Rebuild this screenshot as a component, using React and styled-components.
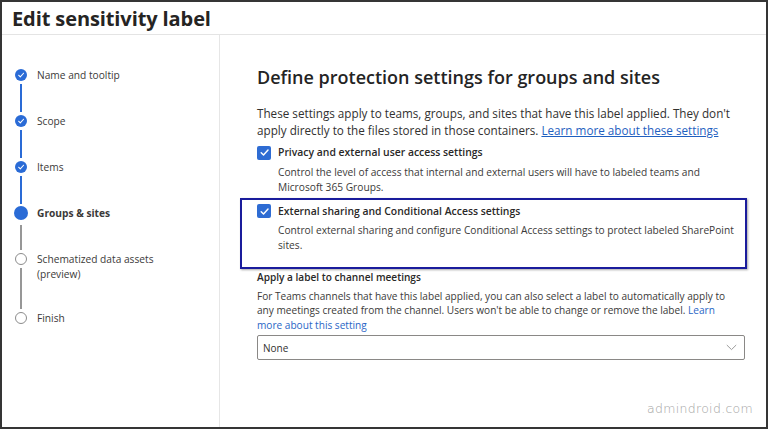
import styled, { createGlobalStyle } from "styled-components";

const GlobalStyle = createGlobalStyle`
    html, body {
        margin: 0;
        padding: 0;
        background: #ffffff;
    }

    * {
        box-sizing: border-box;
    }
`;

const Frame = styled.div`
    position: relative;
    width: 768px;
    height: 429px;
    border: 2px solid #353535;
    background: #ffffff;
    font-family: "Open Sans", "Noto Sans", sans-serif;
    color: #292827;
    overflow: hidden;
    display: flex;
    flex-direction: column;
`;

const Header = styled.div`
    height: 33px;
    flex-shrink: 0;
    border-bottom: 1px solid #e4e4e4;
    display: flex;
    align-items: center;
    padding-left: 10px;
`;

const Title = styled.h1`
    margin: 0;
    font-size: 20px;
    font-weight: 700;
    color: #252423;
    letter-spacing: -0.1px;
`;

const Body = styled.div`
    flex: 1;
    display: flex;
`;

const Nav = styled.div`
    width: 218px;
    flex-shrink: 0;
    border-right: 1px solid #e6e6e6;
    padding: 34px 0 0 12px;
    display: flex;
    flex-direction: column;
`;

const Step = styled.div`
    display: flex;
    height: ${(p) => (p.$tall ? 59 : 46)}px;
`;

const Marker = styled.div`
    width: 14px;
    display: flex;
    flex-direction: column;
    align-items: center;
`;

const Dot = styled.div`
    width: ${(p) => (p.$state === "current" ? 14 : 12)}px;
    height: ${(p) => (p.$state === "current" ? 14 : 12)}px;
    margin-top: ${(p) => (p.$state === "current" ? -1 : 0)}px;
    border-radius: 50%;
    flex-shrink: 0;
    display: flex;
    align-items: center;
    justify-content: center;
    background: ${(p) => (p.$state === "todo" ? "#ffffff" : "#2a6bd6")};
    border: ${(p) => (p.$state === "todo" ? "1.5px solid #8c8c8c" : "none")};
`;

const Connector = styled.div`
    flex: 1;
    width: ${(p) => (p.$done ? 2 : 1.5)}px;
    margin: ${(p) => (p.$fromCurrent ? "5px" : "3px")} 0 3px;
    background: ${(p) => (p.$done ? "#2a6bd6" : "#979797")};
`;

const StepLabel = styled.div`
    margin-left: 9px;
    margin-top: -1.5px;
    font-size: 10.2px;
    line-height: 15px;
    color: #3b3a39;
    font-weight: ${(p) => (p.$current ? 700 : 400)};
`;

const Content = styled.div`
    flex: 1;
    padding: 30px 0 0 37px;
`;

const Column = styled.div`
    width: 488px;
`;

const Heading = styled.h2`
    margin: 0;
    font-size: 18px;
    line-height: 24px;
    font-weight: 600;
    color: #242424;
`;

const Intro = styled.p`
    margin: 16px 0 0;
    font-size: 11.7px;
    line-height: 16.5px;
    color: #323130;
`;

const Link = styled.a`
    color: ${(p) => (p.$underline ? "#1f5fbf" : "#2a66c6")};
    text-decoration: ${(p) => (p.$underline ? "underline" : "none")};
    text-underline-offset: 1px;
    cursor: pointer;
`;

const Option = styled.div`
    display: grid;
    grid-template-columns: 14px 1fr;
    column-gap: 7px;
    margin-top: ${(p) => p.$gap}px;
`;

const Highlight = styled.div`
    margin: 3.5px -2px 0 -17px;
    border: 2px solid #1a1c9c;
    box-shadow: 1px 1px 2px rgba(0, 0, 0, 0.35);
    padding: 2.5px 0 13.5px 15px;
`;

const Box = styled.div`
    width: 14px;
    height: 14px;
    margin-top: 1.5px;
    border-radius: 2px;
    background: #2e6cd3;
    display: flex;
    align-items: center;
    justify-content: center;
`;

const OptionTitle = styled.div`
    font-size: 10.4px;
    line-height: 16px;
    font-weight: 600;
    color: #292827;
`;

const OptionText = styled.div`
    grid-column: 2;
    margin-top: 4.5px;
    font-size: 10.2px;
    line-height: 15px;
    color: #3b3a39;
`;

const SubTitle = styled.div`
    margin-top: 0.5px;
    font-size: 10.1px;
    line-height: 16px;
    font-weight: 600;
    color: #292827;
`;

const SubText = styled.p`
    width: 478px;
    margin: 3.75px 0 0;
    font-size: 10.1px;
    line-height: 14.5px;
    color: #3b3a39;
`;

const Select = styled.div`
    margin-top: 3px;
    height: 25px;
    border: 1px solid #8a8886;
    border-radius: 2px;
    display: flex;
    align-items: center;
    justify-content: space-between;
    padding: 0 7px 0 5px;
    font-size: 10px;
    color: #323130;
`;

const Watermark = styled.div`
    position: absolute;
    right: 13px;
    bottom: 10px;
    font-family: "DejaVu Sans", sans-serif;
    font-weight: 300;
    font-size: 12.5px;
    line-height: 16px;
    letter-spacing: 0.3px;
    color: #a3a3a3;
`;

const Check = ({ size = 8 }) => (
    <svg width={size} height={size} viewBox="0 0 10 10" fill="none">
        <path d="M2 5.3 L4.1 7.3 L8.2 2.8" stroke="#ffffff" strokeWidth="1.3" strokeLinecap="round" strokeLinejoin="round" />
    </svg>
);

const Chevron = () => (
    <svg width="11" height="7" viewBox="0 0 11 7" fill="none">
        <path d="M0.8 1 L5.5 5.6 L10.2 1" stroke="#9b9b9b" strokeWidth="1" />
    </svg>
);

const steps = [
    { label: "Name and tooltip", state: "done" },
    { label: "Scope", state: "done" },
    { label: "Items", state: "done" },
    { label: "Groups & sites", state: "current" },
    { label: <>Schematized data assets<br />(preview)</>, state: "todo", tall: true },
    { label: "Finish", state: "todo" },
];

export default function App() {
    return (
        <>
            <GlobalStyle />
            <Frame>
                <Header>
                    <Title>Edit sensitivity label</Title>
                </Header>

                <Body>
                    <Nav>
                        {steps.map((s, i) => (
                            <Step key={i} $tall={s.tall}>
                                <Marker>
                                    <Dot $state={s.state}>{s.state === "done" && <Check />}</Dot>
                                    {i < steps.length - 1 && (
                                        <Connector $done={s.state === "done"} $fromCurrent={s.state === "current"} />
                                    )}
                                </Marker>
                                <StepLabel $current={s.state === "current"}>{s.label}</StepLabel>
                            </Step>
                        ))}
                    </Nav>

                    <Content>
                        <Column>
                            <Heading>Define protection settings for groups and sites</Heading>
                            <Intro>
                                These settings apply to teams, groups, and sites that have this label applied. They don't
                                apply directly to the files stored in those containers.{" "}
                                <Link $underline>Learn more about these settings</Link>
                            </Intro>

                            <Option $gap={6}>
                                <Box><Check size={11} /></Box>
                                <OptionTitle>Privacy and external user access settings</OptionTitle>
                                <OptionText>
                                    Control the level of access that internal and external users will have to labeled teams and
                                    Microsoft 365 Groups.
                                </OptionText>
                            </Option>

                            <Highlight>
                                <Option $gap={0}>
                                    <Box><Check size={11} /></Box>
                                    <OptionTitle>External sharing and Conditional Access settings</OptionTitle>
                                    <OptionText>
                                        Control external sharing and configure Conditional Access settings to protect labeled SharePoint
                                        sites.
                                    </OptionText>
                                </Option>
                            </Highlight>

                            <SubTitle>Apply a label to channel meetings</SubTitle>
                            <SubText>
                                For Teams channels that have this label applied, you can also select a label to automatically apply to
                                any meetings created from the channel. Users won't be able to change or remove the label.{" "}
                                <Link>Learn more about this setting</Link>
                            </SubText>

                            <Select>
                                <span>None</span>
                                <Chevron />
                            </Select>
                        </Column>
                    </Content>
                </Body>

                <Watermark>admindroid.com</Watermark>
            </Frame>
        </>
    );
}
